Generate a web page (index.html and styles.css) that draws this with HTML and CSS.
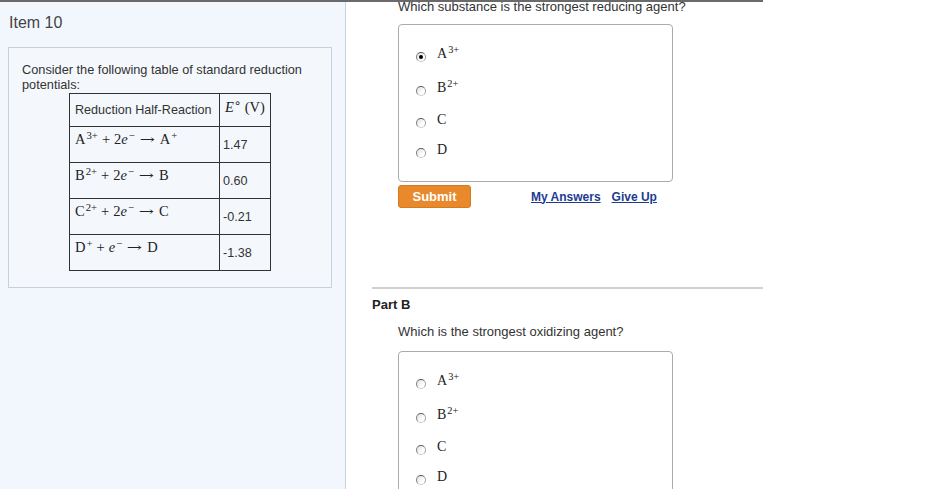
FILE: index.html
```html
<!DOCTYPE html>
<html>
<head>
<meta charset="utf-8">
<link rel="stylesheet" href="styles.css">
</head>
<body>
<div class="page">
  <aside class="left">
    <h1 class="item-title">Item 10</h1>
    <div class="card">
      <p class="intro">Consider the following table of standard reduction potentials:</p>
      <table class="potentials">
        <colgroup><col class="c1"><col class="c2"></colgroup>
        <tr class="head">
          <th class="h1">Reduction Half-Reaction</th>
          <th class="h2"><span class="m"><i>E</i><sup class="deg">∘</sup> (V)</span></th>
        </tr>
        <tr>
          <td class="rx"><span class="m">A<sup>3+</sup><span class="op">+</span>2<i>e</i><sup>−</sup><span class="rel">→</span>A<sup>+</sup></span></td>
          <td class="val">1.47</td>
        </tr>
        <tr>
          <td class="rx"><span class="m">B<sup>2+</sup><span class="op">+</span>2<i>e</i><sup>−</sup><span class="rel">→</span>B</span></td>
          <td class="val">0.60</td>
        </tr>
        <tr>
          <td class="rx"><span class="m">C<sup>2+</sup><span class="op">+</span>2<i>e</i><sup>−</sup><span class="rel">→</span>C</span></td>
          <td class="val">-0.21</td>
        </tr>
        <tr>
          <td class="rx"><span class="m">D<sup>+</sup><span class="op">+</span><i>e</i><sup>−</sup><span class="rel">→</span>D</span></td>
          <td class="val">-1.38</td>
        </tr>
      </table>
    </div>
  </aside>
  <main class="right">
    <section class="part part-a">
      <p class="question">Which substance is the strongest reducing agent?</p>
      <div class="answers">
        <div class="opt tall"><span class="radio on"></span><span class="m lbl">A<sup>3+</sup></span></div>
        <div class="opt tall"><span class="radio"></span><span class="m lbl">B<sup>2+</sup></span></div>
        <div class="opt"><span class="radio"></span><span class="m lbl">C</span></div>
        <div class="opt"><span class="radio"></span><span class="m lbl">D</span></div>
      </div>
      <div class="actions">
        <button class="submit">Submit</button>
        <div class="links">
          <a href="#">My Answers</a>
          <a href="#">Give Up</a>
        </div>
      </div>
    </section>
    <div class="sep"></div>
    <h2 class="part-title">Part B</h2>
    <section class="part part-b">
      <p class="question">Which is the strongest oxidizing agent?</p>
      <div class="answers">
        <div class="opt tall"><span class="radio"></span><span class="m lbl">A<sup>3+</sup></span></div>
        <div class="opt tall"><span class="radio"></span><span class="m lbl">B<sup>2+</sup></span></div>
        <div class="opt"><span class="radio"></span><span class="m lbl">C</span></div>
        <div class="opt"><span class="radio"></span><span class="m lbl">D</span></div>
      </div>
    </section>
  </main>
</div>
</body>
</html>
```
FILE: styles.css
```css
* { box-sizing: border-box; }
html, body { margin: 0; padding: 0; background: #fff; }
body {
  font-family: "Liberation Sans", Arial, sans-serif;
  font-size: 13px;
  color: #333;
  overflow: hidden;
}
.page {
  display: flex;
  width: 763px;
  height: 489px;
  border-top: 2px solid #6a6a6a;
}
.left {
  width: 346px;
  flex: none;
  background: #f2f7fd;
  border-right: 1px solid #c8d2de;
  padding: 12px 13px 0 8px;
}
.item-title {
  margin: 0 0 15px 1px;
  font-size: 16px;
  line-height: 18px;
  font-weight: normal;
  color: #444;
}
.card {
  border: 1px solid #c9d0d9;
  background: #f4f8fc;
  padding: 14px 13px 16px 13px;
}
.intro {
  margin: 0;
  font-size: 12.75px;
  line-height: 15px;
  color: #333;
}
.potentials {
  margin: 1px auto 0;
  border-collapse: collapse;
  table-layout: fixed;
  width: 201px;
}
.c1 { width: 150px; }
.c2 { width: 51px; }
.potentials .h1, .potentials .h2, .potentials .rx, .potentials .val {
  border: 1px solid #333;
  text-align: left;
}
.potentials .h1, .potentials .h2 { height: 33px; }
.potentials .rx, .potentials .val { height: 36px; }
.potentials .h1 {
  font-weight: normal;
  font-size: 12.6px;
  padding: 0 0 0 5px;
  vertical-align: middle;
}
.potentials .h2 {
  font-weight: normal;
  vertical-align: top;
  padding: 3px 0 0 5px;
}
.potentials .rx {
  vertical-align: top;
  padding: 2px 0 0 5px;
}
.potentials .val {
  vertical-align: middle;
  font-size: 12.6px;
  padding: 1px 0 0 3px;
  color: #333;
}
.m {
  font-family: "Liberation Serif", "DejaVu Serif", serif;
  font-size: 14.5px;
  line-height: 20px;
  color: #222;
  white-space: nowrap;
}
.m i { font-style: italic; }
.m sup {
  font-size: 74%;
  line-height: 0;
  vertical-align: 0.45em;
  margin-left: 1px;
}
.m sup.deg {
  font-family: "DejaVu Sans", sans-serif;
  font-size: 80%;
  vertical-align: 0.45em;
  margin-left: 0;
}
.op { margin: 0 4px; }
.rel {
  display: inline-block;
  width: 15px;
  margin: 0 5px;
  text-align: center;
  font-family: "DejaVu Serif", serif;
  font-size: 13px;
  transform: scaleX(1.4);
}

.right {
  flex: 1;
  padding-left: 26px;
  min-width: 0;
}
.part { padding-left: 26px; }
.question {
  margin: 0 0 12px;
  font-size: 13px;
  line-height: 15px;
  color: #333;
}
.part-a .question { margin: -3px 0 10px; }
.answers {
  width: 275px;
  border: 1px solid #ababab;
  border-radius: 4px;
  padding: 12px 0 16px 17px;
  background: #fff;
}
.opt {
  display: flex;
  align-items: center;
  height: 30px;
}
.opt.tall { height: 34px; }
.radio {
  position: relative;
  flex: none;
  width: 10px;
  height: 10px;
  margin: 6px 11px 0 0;
  border-radius: 50%;
  border: 1px solid;
  border-color: #5f5f5f #a0a0a0 #cacaca #7d7d7d;
  background: linear-gradient(135deg, #e0e0e0, #fff 70%);
}
.radio.on::after {
  content: "";
  position: absolute;
  left: 2px;
  top: 2px;
  width: 4px;
  height: 4px;
  border-radius: 50%;
  background: #000;
}
.lbl { font-size: 14px; line-height: 18px; }

.actions {
  display: flex;
  align-items: center;
  margin-top: 3px;
}
.submit {
  width: 73px;
  height: 23px;
  padding: 0;
  background: #e8892b;
  border: 1px solid #d47b20;
  border-radius: 3px;
  color: #fff;
  font-family: "Liberation Sans", Arial, sans-serif;
  font-weight: bold;
  font-size: 13px;
}
.links {
  display: flex;
  gap: 11px;
  margin-left: 60px;
}
.links a {
  font-weight: bold;
  font-size: 12px;
  color: #1b3c8f;
  text-decoration: underline;
}
.sep {
  margin-top: 79px;
  border-top: 2px solid #d0d0d0;
}
.part-title {
  margin: 8px 0 12px;
  font-size: 13px;
  line-height: 15px;
  font-weight: bold;
  color: #222;
}
```
